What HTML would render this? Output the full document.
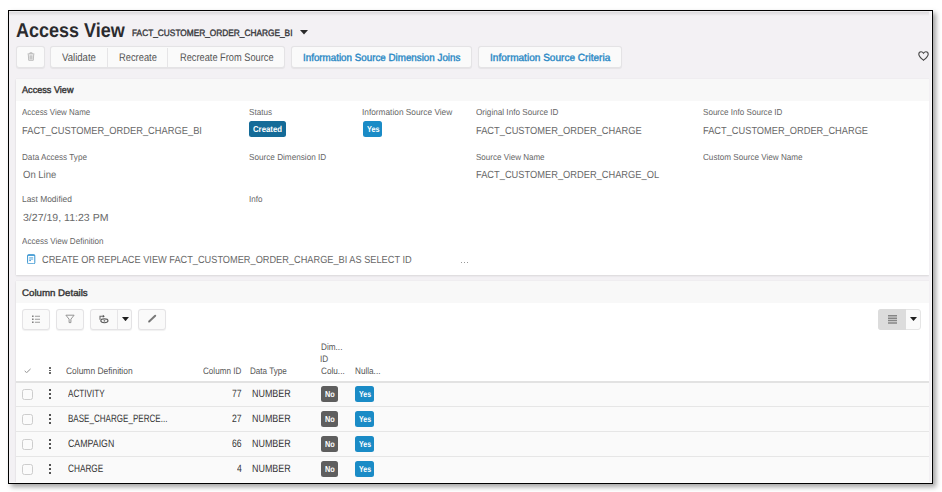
<!DOCTYPE html>
<html><head><meta charset="utf-8">
<style>
*{margin:0;padding:0;box-sizing:border-box}
html,body{width:942px;height:492px;overflow:hidden;background:#fff;font-family:"Liberation Sans",sans-serif}
.a{position:absolute}
.t{position:absolute;white-space:nowrap;line-height:1;transform-origin:0 0;text-rendering:geometricPrecision}
.btn{position:absolute;background:#fafafa;border:1px solid #e4e3e5;border-radius:3px;box-shadow:0 0.5px 1px rgba(0,0,0,.06)}
.badge{position:absolute;border-radius:2.5px;color:#fff;font-weight:bold;font-size:8px;line-height:1;text-rendering:geometricPrecision}
.badge span{position:absolute;white-space:nowrap;transform-origin:0 0}
.no{background:#5e5e5e}
.yes{background:#1a8bc6}
.cb{position:absolute;left:22px;width:11px;height:11px;border:1.2px solid #cdcdcd;border-radius:2.5px;background:#fbfbfb}
.kb{position:absolute;left:49px;width:2.1px;height:2.1px;background:#1b1b1b;border-radius:50%}
.rowline{position:absolute;left:16px;width:913px;height:1px;background:#e6e6e6}
</style></head><body>
<div class="a" style="left:8px;top:10px;width:925px;height:474px;box-shadow:3px 3px 5px rgba(0,0,0,.36)"></div>
<div class="a" style="left:9px;top:11px;width:923px;height:472px;background:#f3f1f4"></div>
<div class="a" style="left:9px;top:11px;width:923px;height:5px;background:linear-gradient(#ecebed 0px,#ecebed 1px,#dcdadd 1px,#e6e4e7 3px,#f3f1f4 5px)"></div>

<!-- caret after subtitle -->
<svg class="a" style="left:300px;top:30px" width="8" height="5" viewBox="0 0 8 5"><path d="M0 0H8L4 4.5Z" fill="#2a2a2a"/></svg>

<!-- toolbar -->
<div class="btn" style="left:16px;top:46px;width:28.5px;height:21.5px"></div>
<svg class="a" style="left:26.5px;top:51.5px" width="8" height="9" viewBox="0 0 8 9"><path d="M0.6 1.9H7.4M2.9 1.9V0.8H5.1V1.9M1.3 2.3L1.7 8.3H6.3L6.7 2.3M3 3.3V7.4M4 3.3V7.4M5 3.3V7.4" fill="none" stroke="#a8a8a8" stroke-width="0.75"/></svg>
<div class="btn" style="left:50px;top:46px;width:235px;height:21.5px"></div>
<div class="a" style="left:107px;top:47.5px;width:1px;height:19px;background:#e6e5e7"></div>
<div class="a" style="left:167px;top:47.5px;width:1px;height:19px;background:#e6e5e7"></div>
<div class="btn" style="left:291px;top:46px;width:180.5px;height:21.5px"></div>
<div class="btn" style="left:478px;top:46px;width:143.5px;height:21.5px"></div>
<!-- heart -->
<svg class="a" style="left:918px;top:51px" width="11" height="10" viewBox="0 0 11 10"><path d="M5.5 9.2C3.5 7.6 0.8 5.6 0.8 3.2C0.8 1.7 1.9 0.8 3.1 0.8C4.2 0.8 5 1.5 5.5 2.3C6 1.5 6.8 0.8 7.9 0.8C9.1 0.8 10.2 1.7 10.2 3.2C10.2 5.6 7.5 7.6 5.5 9.2Z" fill="none" stroke="#444" stroke-width="1.1"/></svg>

<!-- panel 1 -->
<div class="a" style="left:15.7px;top:79px;width:913.5px;height:196px;background:#fff;box-shadow:0 1px 2px rgba(0,0,0,.1),0 0 1px rgba(0,0,0,.08)"></div>
<div class="a" style="left:15.7px;top:79px;width:913.5px;height:22px;background:#f8f8f8"></div>
<div class="badge" style="left:248.8px;top:121.3px;width:37px;height:15.5px;background:#156b98"></div>
<div class="badge yes" style="left:362.6px;top:121.3px;width:19.5px;height:15.5px"></div>
<svg class="a" style="left:27px;top:253.5px" width="8.5" height="10.5" viewBox="0 0 8.5 10.5"><rect x="0.6" y="0.8" width="7.2" height="9" rx="1" fill="none" stroke="#3593d0" stroke-width="1"/><path d="M0.6 1.2H7.8" stroke="#3593d0" stroke-width="1.2"/><path d="M2.2 3.9H6.2" stroke="#3593d0" stroke-width="0.9"/><path d="M2.2 5.3H6.2" stroke="#7fbbe3" stroke-width="0.9"/><path d="M2.2 6.6H4" stroke="#3593d0" stroke-width="0.9"/></svg>
<div class="a" style="left:460.6px;top:262.2px;width:1.2px;height:1.2px;background:#999"></div>
<div class="a" style="left:463.6px;top:262.2px;width:1.2px;height:1.2px;background:#999"></div>
<div class="a" style="left:466.6px;top:262.2px;width:1.2px;height:1.2px;background:#999"></div>

<!-- panel 2 -->
<div class="a" style="left:15.7px;top:281px;width:913.5px;height:201px;background:#fff;box-shadow:0 1px 2px rgba(0,0,0,.1),0 0 1px rgba(0,0,0,.08)"></div>
<div class="a" style="left:15.7px;top:281px;width:913.5px;height:22px;background:#f8f8f8"></div>
<!-- table tools -->
<div class="btn" style="left:22px;top:309px;width:27.5px;height:21px"></div>
<svg class="a" style="left:31px;top:314px" width="11" height="10" viewBox="0 0 11 10"><path d="M1 2.2H2.6M1 5.3H2.6M1 8.2H2.6" stroke="#808080" stroke-width="1.6"/><path d="M3.9 2.2H9M3.9 5.3H9M3.9 8.2H9" stroke="#9a9a9a" stroke-width="1.1"/></svg>
<div class="btn" style="left:56px;top:309px;width:27.5px;height:21px"></div>
<svg class="a" style="left:65px;top:314px" width="10" height="10" viewBox="0 0 10 10"><path d="M0.9 1.2H9.1L5.9 5.2V8.6L4.1 8.6V5.2Z" fill="none" stroke="#8a8a8a" stroke-width="0.9" stroke-linejoin="round"/></svg>
<div class="btn" style="left:90px;top:309px;width:41.5px;height:21px"></div>
<div class="a" style="left:117.2px;top:310.3px;width:1px;height:18.3px;background:#e6e5e7"></div>
<svg class="a" style="left:99px;top:314px" width="10" height="10" viewBox="0 0 10 10"><path d="M1 5.8V2.3H4.2" fill="none" stroke="#6a6a6a" stroke-width="1.1"/><path d="M3.8 0.8L5.8 2.3L3.8 3.8Z" fill="#555"/><ellipse cx="5.4" cy="6.8" rx="3.6" ry="1.9" fill="none" stroke="#5a5a5a" stroke-width="1.1"/><circle cx="5.4" cy="6.8" r="0.9" fill="#777"/></svg>
<svg class="a" style="left:121.5px;top:317px" width="7" height="4.2" viewBox="0 0 7 4.2"><path d="M0 0H7L3.5 4.2Z" fill="#1f1f1f"/></svg>
<div class="btn" style="left:138px;top:309px;width:27.5px;height:21px"></div>
<svg class="a" style="left:147px;top:314px" width="10" height="10" viewBox="0 0 10 10"><path d="M2.4 7.2L8.2 1.8" stroke="#7a7a7a" stroke-width="2" stroke-linecap="round"/><path d="M1.2 8.6L1.9 6.6L3.2 7.9Z" fill="#666"/></svg>
<!-- grid button -->
<div class="a" style="left:878px;top:309px;width:43px;height:21px;border-radius:3px;background:#fafafa;border:1px solid #e5e5e5"></div>
<div class="a" style="left:878px;top:309px;width:28px;height:21px;border-radius:3px 0 0 3px;background:#dcdcdc"></div>
<svg class="a" style="left:888px;top:314.8px" width="9.2" height="9" viewBox="0 0 9.2 9"><path d="M0 0.8H9.2M0 3.2H9.2M0 5.6H9.2M0 8H9.2" stroke="#858585" stroke-width="1.5"/></svg>
<svg class="a" style="left:910px;top:317px" width="7" height="4" viewBox="0 0 7 4"><path d="M0 0H7L3.5 4Z" fill="#1f1f1f"/></svg>

<!-- table header -->
<svg class="a" style="left:23.5px;top:367.5px" width="7.5" height="5.5" viewBox="0 0 7.5 5.5"><path d="M0.7 2.9L2.6 4.7L6.6 0.9" fill="none" stroke="#8a8a8a" stroke-width="0.95"/></svg>
<div class="a" style="left:49.3px;top:367px;width:1.6px;height:1.6px;background:#4a4a4a;border-radius:50%"></div>
<div class="a" style="left:49.3px;top:369.7px;width:1.6px;height:1.6px;background:#4a4a4a;border-radius:50%"></div>
<div class="a" style="left:49.3px;top:372.3px;width:1.6px;height:1.6px;background:#4a4a4a;border-radius:50%"></div>
<div class="a" style="left:15.7px;top:382px;width:913.5px;height:100px;background:#fafafa"></div>
<div class="a" style="left:15.7px;top:381px;width:913.5px;height:1.6px;background:#e2e2e2"></div>

<!-- rows -->
<div class="rowline" style="top:406.3px"></div>
<div class="rowline" style="top:431.3px"></div>
<div class="rowline" style="top:456.3px"></div>
<div class="cb" style="top:389px"></div>
<div class="cb" style="top:414px"></div>
<div class="cb" style="top:439px"></div>
<div class="cb" style="top:464px"></div>
<div class="kb" style="top:389.2px"></div><div class="kb" style="top:393px"></div><div class="kb" style="top:396.8px"></div>
<div class="kb" style="top:414.2px"></div><div class="kb" style="top:418px"></div><div class="kb" style="top:421.8px"></div>
<div class="kb" style="top:439.2px"></div><div class="kb" style="top:443px"></div><div class="kb" style="top:446.8px"></div>
<div class="kb" style="top:464.2px"></div><div class="kb" style="top:468px"></div><div class="kb" style="top:471.8px"></div>

<div class="badge no" style="left:320.6px;top:386.4px;width:17.6px;height:15.3px"></div>
<div class="badge yes" style="left:354.5px;top:386.4px;width:19.8px;height:15.3px"></div>
<div class="badge no" style="left:320.6px;top:411.4px;width:17.6px;height:15.3px"></div>
<div class="badge yes" style="left:354.5px;top:411.4px;width:19.8px;height:15.3px"></div>
<div class="badge no" style="left:320.6px;top:436.4px;width:17.6px;height:15.3px"></div>
<div class="badge yes" style="left:354.5px;top:436.4px;width:19.8px;height:15.3px"></div>
<div class="badge no" style="left:320.6px;top:461.4px;width:17.6px;height:15.3px"></div>
<div class="badge yes" style="left:354.5px;top:461.4px;width:19.8px;height:15.3px"></div>

<div class="t" style="left:16.00px;top:21px;font-size:20.1px;font-weight:bold;color:#2b2b2e;transform:scaleX(0.8959)">Access View</div>
<div class="t" style="left:132.10px;top:29px;font-size:9.3px;font-weight:normal;color:#3a3a3e;transform:scaleX(0.8933);-webkit-text-stroke:0.4px #3a3a3e">FACT_CUSTOMER_ORDER_CHARGE_BI</div>
<div class="t" style="left:62.00px;top:53px;font-size:11.0px;font-weight:normal;color:#555555;transform:scaleX(0.8718)">Validate</div>
<div class="t" style="left:118.95px;top:53px;font-size:11.0px;font-weight:normal;color:#555555;transform:scaleX(0.8488)">Recreate</div>
<div class="t" style="left:179.56px;top:53px;font-size:11.0px;font-weight:normal;color:#555555;transform:scaleX(0.8409)">Recreate From Source</div>
<div class="t" style="left:302.66px;top:54px;font-size:10.4px;font-weight:normal;color:#2a89c5;transform:scaleX(0.9428);-webkit-text-stroke:0.4px #2a89c5">Information Source Dimension Joins</div>
<div class="t" style="left:489.63px;top:54px;font-size:10.4px;font-weight:normal;color:#2a89c5;transform:scaleX(0.9683);-webkit-text-stroke:0.4px #2a89c5">Information Source Criteria</div>
<div class="t" style="left:21.90px;top:86px;font-size:9.5px;font-weight:normal;color:#363636;transform:scaleX(0.9593);-webkit-text-stroke:0.4px #363636">Access View</div>
<div class="t" style="left:21.90px;top:289px;font-size:9.5px;font-weight:normal;color:#363636;transform:scaleX(1.0200);-webkit-text-stroke:0.4px #363636">Column Details</div>
<div class="t" style="left:22.00px;top:108px;font-size:8.7px;font-weight:normal;color:#666666;transform:scaleX(0.9135)">Access View Name</div>
<div class="t" style="left:248.80px;top:108px;font-size:8.7px;font-weight:normal;color:#666666;transform:scaleX(0.9359)">Status</div>
<div class="t" style="left:362.10px;top:108px;font-size:8.7px;font-weight:normal;color:#666666;transform:scaleX(0.9547)">Information Source View</div>
<div class="t" style="left:475.70px;top:108px;font-size:8.7px;font-weight:normal;color:#666666;transform:scaleX(0.9386)">Original Info Source ID</div>
<div class="t" style="left:702.60px;top:108px;font-size:8.7px;font-weight:normal;color:#666666;transform:scaleX(0.9294)">Source Info Source ID</div>
<div class="t" style="left:22.00px;top:127px;font-size:10.3px;font-weight:normal;color:#696969;transform:scaleX(0.9046)">FACT_CUSTOMER_ORDER_CHARGE_BI</div>
<div class="t" style="left:475.70px;top:127px;font-size:10.3px;font-weight:normal;color:#696969;transform:scaleX(0.9027)">FACT_CUSTOMER_ORDER_CHARGE</div>
<div class="t" style="left:703.00px;top:127px;font-size:10.3px;font-weight:normal;color:#696969;transform:scaleX(0.8995)">FACT_CUSTOMER_ORDER_CHARGE</div>
<div class="t" style="left:22.00px;top:153px;font-size:8.7px;font-weight:normal;color:#666666;transform:scaleX(0.9359)">Data Access Type</div>
<div class="t" style="left:248.90px;top:153px;font-size:8.7px;font-weight:normal;color:#666666;transform:scaleX(0.9402)">Source Dimension ID</div>
<div class="t" style="left:475.70px;top:153px;font-size:8.7px;font-weight:normal;color:#666666;transform:scaleX(0.9243)">Source View Name</div>
<div class="t" style="left:702.60px;top:153px;font-size:8.7px;font-weight:normal;color:#666666;transform:scaleX(0.9349)">Custom Source View Name</div>
<div class="t" style="left:22.90px;top:171px;font-size:10.3px;font-weight:normal;color:#696969;transform:scaleX(0.9215)">On Line</div>
<div class="t" style="left:475.70px;top:171px;font-size:10.3px;font-weight:normal;color:#696969;transform:scaleX(0.9020)">FACT_CUSTOMER_ORDER_CHARGE_OL</div>
<div class="t" style="left:22.10px;top:195px;font-size:8.7px;font-weight:normal;color:#666666;transform:scaleX(0.9667)">Last Modified</div>
<div class="t" style="left:248.90px;top:195px;font-size:8.7px;font-weight:normal;color:#666666;transform:scaleX(0.9267)">Info</div>
<div class="t" style="left:22.60px;top:214px;font-size:10.3px;font-weight:normal;color:#696969;transform:scaleX(1.0253)">3/27/19, 11:23 PM</div>
<div class="t" style="left:22.10px;top:237px;font-size:8.7px;font-weight:normal;color:#666666;transform:scaleX(0.9295)">Access View Definition</div>
<div class="t" style="left:42.10px;top:256px;font-size:10.3px;font-weight:normal;color:#696969;transform:scaleX(0.8947)">CREATE OR REPLACE VIEW FACT_CUSTOMER_ORDER_CHARGE_BI AS SELECT ID</div>
<div class="t" style="left:66.10px;top:367px;font-size:9.3px;font-weight:normal;color:#555555;transform:scaleX(0.9082)">Column Definition</div>
<div class="t" style="left:202.70px;top:367px;font-size:9.3px;font-weight:normal;color:#555555;transform:scaleX(0.8705)">Column ID</div>
<div class="t" style="left:250.00px;top:367px;font-size:9.3px;font-weight:normal;color:#555555;transform:scaleX(0.8714)">Data Type</div>
<div class="t" style="left:321.00px;top:343px;font-size:9.3px;font-weight:normal;color:#555555;transform:scaleX(0.8822)">Dim...</div>
<div class="t" style="left:320.12px;top:355px;font-size:9.3px;font-weight:normal;color:#555555;transform:scaleX(0.8822)">ID</div>
<div class="t" style="left:321.00px;top:367px;font-size:9.3px;font-weight:normal;color:#555555;transform:scaleX(0.8822)">Colu...</div>
<div class="t" style="left:355.00px;top:367px;font-size:9.3px;font-weight:normal;color:#555555;transform:scaleX(0.8786)">Nulla...</div>
<div class="t" style="left:68.00px;top:389px;font-size:10.7px;font-weight:normal;color:#353535;transform:scaleX(0.7646)">ACTIVITY</div>
<div class="t" style="left:231.92px;top:389px;font-size:10.7px;font-weight:normal;color:#353535;transform:scaleX(0.8069)">77</div>
<div class="t" style="left:251.76px;top:389px;font-size:10.7px;font-weight:normal;color:#353535;transform:scaleX(0.8356)">NUMBER</div>
<div class="t" style="left:68.05px;top:414px;font-size:10.7px;font-weight:normal;color:#353535;transform:scaleX(0.7538)">BASE_CHARGE_PERCE...</div>
<div class="t" style="left:231.92px;top:414px;font-size:10.7px;font-weight:normal;color:#353535;transform:scaleX(0.8069)">27</div>
<div class="t" style="left:251.76px;top:414px;font-size:10.7px;font-weight:normal;color:#353535;transform:scaleX(0.8356)">NUMBER</div>
<div class="t" style="left:68.00px;top:439px;font-size:10.7px;font-weight:normal;color:#353535;transform:scaleX(0.8232)">CAMPAIGN</div>
<div class="t" style="left:231.92px;top:439px;font-size:10.7px;font-weight:normal;color:#353535;transform:scaleX(0.8069)">66</div>
<div class="t" style="left:251.76px;top:439px;font-size:10.7px;font-weight:normal;color:#353535;transform:scaleX(0.8356)">NUMBER</div>
<div class="t" style="left:68.00px;top:464px;font-size:10.7px;font-weight:normal;color:#353535;transform:scaleX(0.7711)">CHARGE</div>
<div class="t" style="left:236.76px;top:464px;font-size:10.7px;font-weight:normal;color:#353535;transform:scaleX(0.8069)">4</div>
<div class="t" style="left:251.76px;top:464px;font-size:10.7px;font-weight:normal;color:#353535;transform:scaleX(0.8356)">NUMBER</div>
<div class="t" style="left:253.20px;top:125px;font-size:8.6px;font-weight:bold;color:#ffffff;transform:scaleX(0.9062)">Created</div>
<div class="t" style="left:366.50px;top:125px;font-size:8.6px;font-weight:bold;color:#ffffff;transform:scaleX(0.8467)">Yes</div>
<div class="t" style="left:324.50px;top:390px;font-size:8.6px;font-weight:bold;color:#ffffff;transform:scaleX(0.8500)">No</div>
<div class="t" style="left:358.50px;top:390px;font-size:8.6px;font-weight:bold;color:#ffffff;transform:scaleX(0.8133)">Yes</div>
<div class="t" style="left:324.50px;top:415px;font-size:8.6px;font-weight:bold;color:#ffffff;transform:scaleX(0.8500)">No</div>
<div class="t" style="left:358.50px;top:415px;font-size:8.6px;font-weight:bold;color:#ffffff;transform:scaleX(0.8133)">Yes</div>
<div class="t" style="left:324.50px;top:440px;font-size:8.6px;font-weight:bold;color:#ffffff;transform:scaleX(0.8500)">No</div>
<div class="t" style="left:358.50px;top:440px;font-size:8.6px;font-weight:bold;color:#ffffff;transform:scaleX(0.8133)">Yes</div>
<div class="t" style="left:324.50px;top:465px;font-size:8.6px;font-weight:bold;color:#ffffff;transform:scaleX(0.8500)">No</div>
<div class="t" style="left:358.50px;top:465px;font-size:8.6px;font-weight:bold;color:#ffffff;transform:scaleX(0.8133)">Yes</div>

<!-- frame -->
<div class="a" style="left:929.2px;top:11px;width:2.8px;height:472px;background:#f3f1f4"></div>
<div class="a" style="left:9px;top:482px;width:923px;height:1px;background:#fbfbfb"></div>
<div class="a" style="left:931px;top:11px;width:1px;height:472px;background:#fbfbfb"></div>
<div class="a" style="left:8px;top:10px;width:925px;height:474px;border:1px solid #000"></div>
</body></html>
